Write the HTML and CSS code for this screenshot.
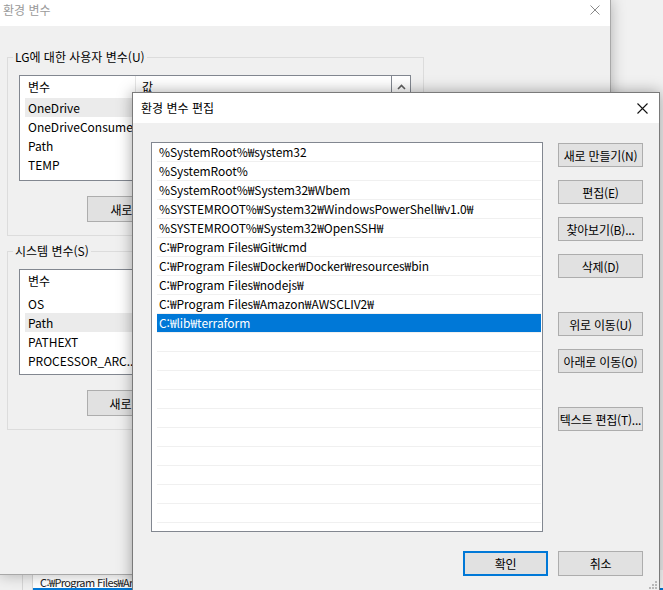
FILE: index.html
```html
<!DOCTYPE html>
<html lang="ko">
<head>
<meta charset="utf-8">
<title>환경 변수 편집</title>
<link rel="stylesheet" href="styles.css">
</head>
<body>
<div class="desk">
  <div class="under">
    <div class="u-cell u-a"></div>
    <div class="u-cell u-b"></div>
    <div class="u-cell u-c"><span>C:₩Program Files₩Amazon₩</span></div>
  </div>

  <div class="win back">
    <div class="back-title">
      <span class="title">환경 변수</span>
      <svg class="x-back" width="10" height="10" viewBox="0 0 10 10"><path d="M0.5 0.5L9.5 9.5M9.5 0.5L0.5 9.5" stroke="#8a8a8a" stroke-width="1" fill="none"/></svg>
    </div>
    <div class="back-body">
      <div class="group">
        <div class="legend">LG에 대한 사용자 변수(U)</div>
        <div class="vlist">
          <div class="vhead short">
            <span class="c1">변수</span><span class="c2">값</span>
            <span class="scrollup"><svg width="9" height="6" viewBox="0 0 9 6"><path d="M1 5L4.5 1.5L8 5" stroke="#606060" stroke-width="1.6" fill="none"/></svg></span>
          </div>
          <div class="vrow hl">OneDrive</div>
          <div class="vrow">OneDriveConsumer</div>
          <div class="vrow">Path</div>
          <div class="vrow">TEMP</div>
        </div>
        <div class="brow"><button class="btn wide">새로 만들기(N)...</button></div>
      </div>

      <div class="group g2">
        <div class="legend">시스템 변수(S)</div>
        <div class="vlist">
          <div class="vhead">
            <span class="c1">변수</span><span class="c2">값</span>
          </div>
          <div class="vrow">OS</div>
          <div class="vrow hl">Path</div>
          <div class="vrow">PATHEXT</div>
          <div class="vrow">PROCESSOR_ARC...</div>
        </div>
        <div class="brow"><button class="btn wide">새로 만들기(W)...</button></div>
      </div>
    </div>
  </div>

  <div class="win front">
    <div class="front-title">
      <span class="title">환경 변수 편집</span>
      <svg class="x-front" width="11" height="11" viewBox="0 0 11 11"><path d="M0.5 0.5L10.5 10.5M10.5 0.5L0.5 10.5" stroke="#111" stroke-width="1.1" fill="none"/></svg>
    </div>
    <div class="front-body">
      <div class="main">
        <div class="plist">
          <div class="prow">%SystemRoot%₩system32</div>
          <div class="prow">%SystemRoot%</div>
          <div class="prow">%SystemRoot%₩System32₩Wbem</div>
          <div class="prow">%SYSTEMROOT%₩System32₩WindowsPowerShell₩v1.0₩</div>
          <div class="prow">%SYSTEMROOT%₩System32₩OpenSSH₩</div>
          <div class="prow">C:₩Program Files₩Git₩cmd</div>
          <div class="prow">C:₩Program Files₩Docker₩Docker₩resources₩bin</div>
          <div class="prow">C:₩Program Files₩nodejs₩</div>
          <div class="prow">C:₩Program Files₩Amazon₩AWSCLIV2₩</div>
          <div class="prow sel">C:₩lib₩terraform</div>
          <div class="prow"></div>
          <div class="prow"></div>
          <div class="prow"></div>
          <div class="prow"></div>
          <div class="prow"></div>
          <div class="prow"></div>
          <div class="prow"></div>
          <div class="prow"></div>
          <div class="prow"></div>
          <div class="prow"></div>
          <div class="prow"></div>
        </div>
        <div class="btncol">
          <button class="btn">새로 만들기(N)</button>
          <button class="btn">편집(E)</button>
          <button class="btn">찾아보기(B)...</button>
          <button class="btn">삭제(D)</button>
          <button class="btn sep">위로 이동(U)</button>
          <button class="btn">아래로 이동(O)</button>
          <button class="btn sep">텍스트 편집(T)...</button>
        </div>
      </div>
      <div class="bottom">
        <button class="btn okb">확인</button>
        <button class="btn">취소</button>
      </div>
    </div>
    <svg class="grip" width="10" height="10" viewBox="0 0 10 10">
      <rect x="7" y="1" width="2" height="2" fill="#b8b8b8"/>
      <rect x="4" y="4" width="2" height="2" fill="#b8b8b8"/>
      <rect x="7" y="4" width="2" height="2" fill="#b8b8b8"/>
      <rect x="1" y="7" width="2" height="2" fill="#b8b8b8"/>
      <rect x="4" y="7" width="2" height="2" fill="#b8b8b8"/>
      <rect x="7" y="7" width="2" height="2" fill="#b8b8b8"/>
    </svg>
  </div>
</div>
</body>
</html>
```

FILE: styles.css
```css
* { box-sizing: border-box; }
html, body { margin: 0; padding: 0; }
body {
  width: 663px;
  height: 590px;
  overflow: hidden;
  background: #f0f0f0;
  font-family: "Noto Sans CJK KR", "Noto Sans", sans-serif;
  font-size: 12px;
  color: #000;
}
.desk { position: relative; width: 663px; height: 590px; overflow: hidden; background: #f1f1f1; }

/* window underneath, bottom strip */
.under {
  position: absolute;
  left: 0; top: 570px;
  width: 663px; height: 20px;
  display: flex;
  background: #f0f0f0;
}
.u-cell { height: 20px; }
.u-a { width: 23px; border-right: 1px solid #d6d6d6; }
.u-b { width: 10px; border-right: 1px solid #d6d6d6; }
.u-c {
  flex: 1;
  background: #fff;
  padding: 7px 0 0 7px;
  font-size: 11px;
  line-height: 11px;
  letter-spacing: -0.6px;
  color: #222;
  border-bottom: 2px solid #0078d7;
  white-space: nowrap;
  overflow: hidden;
}

/* back dialog */
.back {
  position: absolute;
  left: 0; top: 0;
  width: 611px; height: 575px;
  background: #f0f0f0;
  border-right: 1px solid #a8a8a8;
  border-bottom: 1px solid #a8a8a8;
  box-shadow: 0 0 14px rgba(0, 0, 0, 0.28);
}
.back-title {
  height: 26px;
  background: #fff;
  display: flex;
  align-items: flex-start;
  justify-content: space-between;
  padding: 0 10px 0 3px;
  color: #9a9a9a;
  line-height: 20px;
}
.x-back { margin-top: 5px; }
.back-body { padding: 31px 0 0 7px; }
.group {
  width: 417px;
  border: 1px solid #dcdcdc;
  padding: 0 11px 13px;
}
.g2 { margin-top: 15px; }
.legend {
  width: fit-content;
  height: 16px;
  line-height: 16px;
  margin: -9px 0 0 -6px;
  padding: 0 2px;
  background: #f0f0f0;
}
.vlist {
  width: 392px;
  height: 106px;
  margin-top: 10px;
  border: 1px solid #828790;
  background: #fff;
}
.vhead { display: flex; height: 24px; align-items: stretch; }
.vhead.short { height: 22px; }
.c1 { width: 116px; padding-left: 8px; line-height: 21px; border-right: 1px solid #e5e5e5; }
.c2 { flex: 1; padding-left: 6px; line-height: 21px; }
.scrollup {
  width: 19px;
  height: 22px;
  border-left: 1px solid #828790;
  display: flex;
  align-items: center;
  justify-content: center;
}
.vrow {
  height: 19px;
  line-height: 19px;
  margin-left: 5px;
  padding-left: 3px;
  white-space: nowrap;
}
.vrow.hl { background: #ebebeb; }
.brow { margin-top: 15px; padding-left: 68px; }

/* buttons */
.btn {
  font-family: inherit;
  font-size: 12px;
  color: #000;
  background: #e1e1e1;
  border: 1px solid #adadad;
  height: 24px;
  width: 85px;
  padding: 0;
  margin: 0;
  white-space: nowrap;
  letter-spacing: -0.2px;
}
.btn.wide { width: 130px; height: 26px; }

/* front dialog */
.front {
  position: absolute;
  left: 132px; top: 92px;
  width: 528px; height: 500px;
  background: #f0f0f0;
  border: 1px solid #7a7a7a;
  box-shadow: 0 0 14px rgba(0, 0, 0, 0.35);
}
.front-title {
  height: 30px;
  background: #fff;
  display: flex;
  align-items: center;
  justify-content: space-between;
  padding: 0 11px 0 8px;
}
.front-title .title { margin-top: -1px; }
.front-body { padding: 19px 16px 0 18px; }
.main { display: flex; gap: 15px; }
.plist {
  width: 392px;
  height: 390px;
  border: 1px solid #828790;
  background: #fff;
  overflow: hidden;
}
.prow {
  height: 19px;
  margin: 0 1px 0 5px;
  padding-left: 2px;
  line-height: 18px;
  border-bottom: 1px solid #f0f0f0;
  white-space: nowrap;
  overflow: hidden;
  letter-spacing: -0.05px;
}
.prow.sel { background: #0078d7; color: #fff; }
.btncol {
  display: flex;
  flex-direction: column;
  gap: 13px;
  padding-top: 1px;
}
.btncol .sep { margin-top: 21px; }
.bottom {
  display: flex;
  justify-content: flex-end;
  gap: 10px;
  margin-top: 19px;
}
.bottom .btn { height: 25px; }
.okb { border: 2px solid #0078d7; }
.grip { position: absolute; right: 1px; bottom: 1px; }
```
